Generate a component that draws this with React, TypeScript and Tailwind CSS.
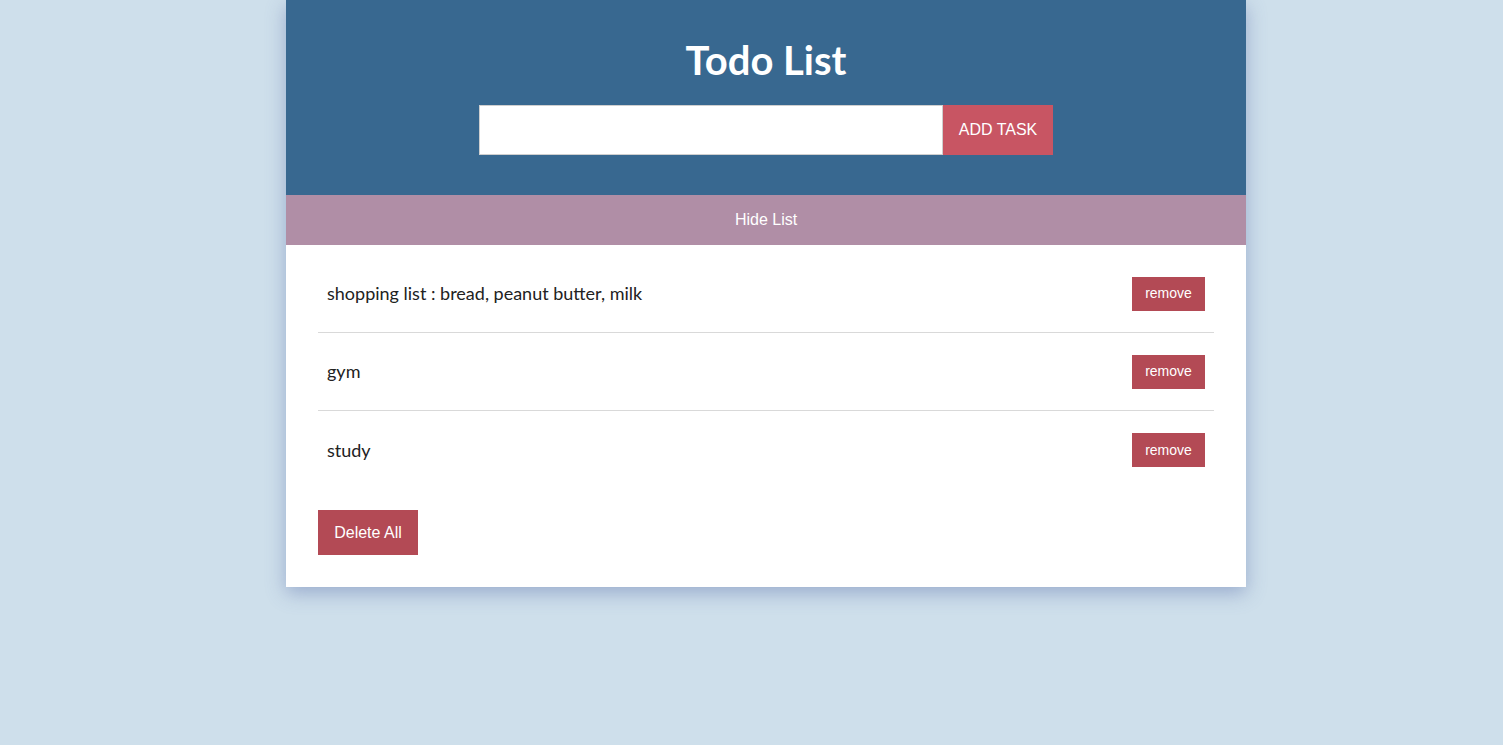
import { useState } from 'react'

const tasks = ['shopping list : bread, peanut butter, milk', 'gym', 'study']

export default function App() {
  const [items, setItems] = useState(tasks)
  const [text, setText] = useState('')
  const [show, setShow] = useState(true)

  const add = () => {
    if (!text.trim()) return
    setItems([...items, text.trim()])
    setText('')
  }

  return (
    <div className="min-h-[745px] bg-[#cedfeb] pl-[29px] font-['Lato',sans-serif]">
      <div className="mx-auto w-[960px] bg-white shadow-[0_6px_18px_rgba(90,110,170,0.45)]">
        {/* Header */}
        <div className="bg-[#386890] h-[195px] flex flex-col items-center pt-[36px]">
          <h1 className="text-[40px] leading-[48px] font-bold text-white">Todo List</h1>
          <div className="flex mt-[21px]">
            <input
              value={text}
              onChange={(e) => setText(e.target.value)}
              className="w-[464px] h-[50px] border border-[#cfcfcf] bg-white px-3 text-[16px] outline-none"
            />
            <button
              onClick={add}
              className="w-[110px] h-[50px] bg-[#c85563] text-white text-[16px] font-['Liberation_Sans',Arial,sans-serif]"
            >
              ADD TASK
            </button>
          </div>
        </div>

        {/* Toggle */}
        <button
          onClick={() => setShow(!show)}
          className="w-full h-[50px] bg-[#b08ea6] text-white text-[16px] font-['Liberation_Sans',Arial,sans-serif]"
        >
          {show ? 'Hide List' : 'Show List'}
        </button>

        <div className="px-[32px] pt-[10px] pb-[32px]">
          {show && (
            <ul>
              {items.map((t, i) => (
                <li
                  key={i}
                  className={`flex items-center justify-between h-[78px] px-[9px] ${i < items.length - 1 ? 'border-b border-[#d9d9d9]' : ''}`}
                >
                  <span className="text-[18px] text-[#222]">{t}</span>
                  <button
                    onClick={() => setItems(items.filter((_, j) => j !== i))}
                    className="w-[73px] h-[34px] bg-[#b34a55] text-white text-[14px] font-['Liberation_Sans',Arial,sans-serif]"
                  >
                    remove
                  </button>
                </li>
              ))}
            </ul>
          )}
          <button
            onClick={() => setItems([])}
            className="mt-[21px] w-[100px] h-[45px] bg-[#b34a55] text-white text-[16px] font-['Liberation_Sans',Arial,sans-serif]"
          >
            Delete All
          </button>
        </div>
      </div>
    </div>
  )
}
